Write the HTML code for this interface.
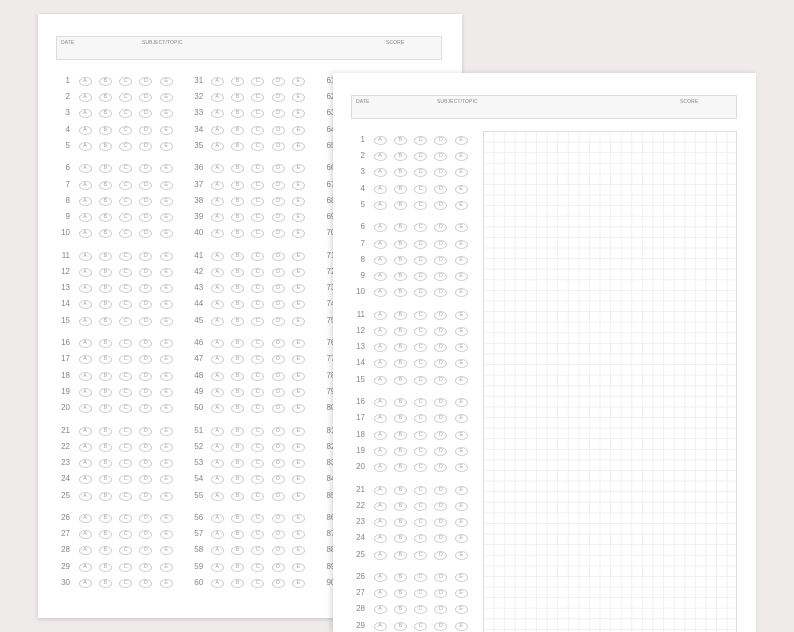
<!DOCTYPE html>
<html><head><meta charset="utf-8"><style>
*{margin:0;padding:0;box-sizing:border-box}
html,body{width:794px;height:632px;overflow:hidden;background:#efebea;font-family:"Liberation Sans",sans-serif;position:relative}
.pg{position:absolute;background:#fff;box-shadow:0 1px 4px rgba(0,0,0,.18);overflow:hidden}
#p1{left:38px;top:14px;width:424px;height:604px}
#p2{left:333px;top:73px;width:423px;height:559px;box-shadow:-2px 0 5px rgba(0,0,0,.15)}
.hd{position:absolute;left:18px;top:22px;width:386px;height:24px;border:1px solid #dcdcdc;background:#f7f7f7}
.hd span{position:absolute;top:3px;font-size:5px;color:#888;letter-spacing:.1px}
.r{position:absolute;left:18px;height:10px;white-space:nowrap;font-size:0}
.r b{display:inline-block;width:14px;text-align:right;font-weight:normal;font-size:8px;line-height:10px;color:#858585;vertical-align:top}
.r b.w{width:30.5px}
.r i{display:inline-block;width:13px;height:9px;margin-top:.5px;border:1px solid #cfcfcf;border-radius:50%;font-style:normal;font-size:5.5px;line-height:7px;text-align:center;color:#a8a8a8;margin-left:7.3px;vertical-align:top}
.r b+i{margin-left:8.5px}
.r b.w+i{margin-left:7.5px}
.grid{position:absolute;left:150px;top:58px;width:254px;height:501px;border:1px solid #ddd;border-bottom:none;
background-image:linear-gradient(#f0f0f0 1px,transparent 1px),linear-gradient(90deg,#f0f0f0 1px,transparent 1px);background-size:10.6px 10.6px;background-position:-1px -1px}
</style></head><body>
<div class="pg" id="p1">
<div class="hd"><span style="left:4px">DATE</span><span style="left:85px">SUBJECT/TOPIC</span><span style="left:329px">SCORE</span></div>
<div class="r" style="top:62px"><b>1</b><i>A</i><i>B</i><i>C</i><i>D</i><i>E</i><b class="w">31</b><i>A</i><i>B</i><i>C</i><i>D</i><i>E</i><b class="w">61</b></div>
<div class="r" style="top:78px"><b>2</b><i>A</i><i>B</i><i>C</i><i>D</i><i>E</i><b class="w">32</b><i>A</i><i>B</i><i>C</i><i>D</i><i>E</i><b class="w">62</b></div>
<div class="r" style="top:94px"><b>3</b><i>A</i><i>B</i><i>C</i><i>D</i><i>E</i><b class="w">33</b><i>A</i><i>B</i><i>C</i><i>D</i><i>E</i><b class="w">63</b></div>
<div class="r" style="top:111px"><b>4</b><i>A</i><i>B</i><i>C</i><i>D</i><i>E</i><b class="w">34</b><i>A</i><i>B</i><i>C</i><i>D</i><i>E</i><b class="w">64</b></div>
<div class="r" style="top:127px"><b>5</b><i>A</i><i>B</i><i>C</i><i>D</i><i>E</i><b class="w">35</b><i>A</i><i>B</i><i>C</i><i>D</i><i>E</i><b class="w">65</b></div>
<div class="r" style="top:149px"><b>6</b><i>A</i><i>B</i><i>C</i><i>D</i><i>E</i><b class="w">36</b><i>A</i><i>B</i><i>C</i><i>D</i><i>E</i><b class="w">66</b></div>
<div class="r" style="top:166px"><b>7</b><i>A</i><i>B</i><i>C</i><i>D</i><i>E</i><b class="w">37</b><i>A</i><i>B</i><i>C</i><i>D</i><i>E</i><b class="w">67</b></div>
<div class="r" style="top:182px"><b>8</b><i>A</i><i>B</i><i>C</i><i>D</i><i>E</i><b class="w">38</b><i>A</i><i>B</i><i>C</i><i>D</i><i>E</i><b class="w">68</b></div>
<div class="r" style="top:198px"><b>9</b><i>A</i><i>B</i><i>C</i><i>D</i><i>E</i><b class="w">39</b><i>A</i><i>B</i><i>C</i><i>D</i><i>E</i><b class="w">69</b></div>
<div class="r" style="top:214px"><b>10</b><i>A</i><i>B</i><i>C</i><i>D</i><i>E</i><b class="w">40</b><i>A</i><i>B</i><i>C</i><i>D</i><i>E</i><b class="w">70</b></div>
<div class="r" style="top:237px"><b>11</b><i>A</i><i>B</i><i>C</i><i>D</i><i>E</i><b class="w">41</b><i>A</i><i>B</i><i>C</i><i>D</i><i>E</i><b class="w">71</b></div>
<div class="r" style="top:253px"><b>12</b><i>A</i><i>B</i><i>C</i><i>D</i><i>E</i><b class="w">42</b><i>A</i><i>B</i><i>C</i><i>D</i><i>E</i><b class="w">72</b></div>
<div class="r" style="top:269px"><b>13</b><i>A</i><i>B</i><i>C</i><i>D</i><i>E</i><b class="w">43</b><i>A</i><i>B</i><i>C</i><i>D</i><i>E</i><b class="w">73</b></div>
<div class="r" style="top:285px"><b>14</b><i>A</i><i>B</i><i>C</i><i>D</i><i>E</i><b class="w">44</b><i>A</i><i>B</i><i>C</i><i>D</i><i>E</i><b class="w">74</b></div>
<div class="r" style="top:302px"><b>15</b><i>A</i><i>B</i><i>C</i><i>D</i><i>E</i><b class="w">45</b><i>A</i><i>B</i><i>C</i><i>D</i><i>E</i><b class="w">75</b></div>
<div class="r" style="top:324px"><b>16</b><i>A</i><i>B</i><i>C</i><i>D</i><i>E</i><b class="w">46</b><i>A</i><i>B</i><i>C</i><i>D</i><i>E</i><b class="w">76</b></div>
<div class="r" style="top:340px"><b>17</b><i>A</i><i>B</i><i>C</i><i>D</i><i>E</i><b class="w">47</b><i>A</i><i>B</i><i>C</i><i>D</i><i>E</i><b class="w">77</b></div>
<div class="r" style="top:357px"><b>18</b><i>A</i><i>B</i><i>C</i><i>D</i><i>E</i><b class="w">48</b><i>A</i><i>B</i><i>C</i><i>D</i><i>E</i><b class="w">78</b></div>
<div class="r" style="top:373px"><b>19</b><i>A</i><i>B</i><i>C</i><i>D</i><i>E</i><b class="w">49</b><i>A</i><i>B</i><i>C</i><i>D</i><i>E</i><b class="w">79</b></div>
<div class="r" style="top:389px"><b>20</b><i>A</i><i>B</i><i>C</i><i>D</i><i>E</i><b class="w">50</b><i>A</i><i>B</i><i>C</i><i>D</i><i>E</i><b class="w">80</b></div>
<div class="r" style="top:412px"><b>21</b><i>A</i><i>B</i><i>C</i><i>D</i><i>E</i><b class="w">51</b><i>A</i><i>B</i><i>C</i><i>D</i><i>E</i><b class="w">81</b></div>
<div class="r" style="top:428px"><b>22</b><i>A</i><i>B</i><i>C</i><i>D</i><i>E</i><b class="w">52</b><i>A</i><i>B</i><i>C</i><i>D</i><i>E</i><b class="w">82</b></div>
<div class="r" style="top:444px"><b>23</b><i>A</i><i>B</i><i>C</i><i>D</i><i>E</i><b class="w">53</b><i>A</i><i>B</i><i>C</i><i>D</i><i>E</i><b class="w">83</b></div>
<div class="r" style="top:460px"><b>24</b><i>A</i><i>B</i><i>C</i><i>D</i><i>E</i><b class="w">54</b><i>A</i><i>B</i><i>C</i><i>D</i><i>E</i><b class="w">84</b></div>
<div class="r" style="top:477px"><b>25</b><i>A</i><i>B</i><i>C</i><i>D</i><i>E</i><b class="w">55</b><i>A</i><i>B</i><i>C</i><i>D</i><i>E</i><b class="w">85</b></div>
<div class="r" style="top:499px"><b>26</b><i>A</i><i>B</i><i>C</i><i>D</i><i>E</i><b class="w">56</b><i>A</i><i>B</i><i>C</i><i>D</i><i>E</i><b class="w">86</b></div>
<div class="r" style="top:515px"><b>27</b><i>A</i><i>B</i><i>C</i><i>D</i><i>E</i><b class="w">57</b><i>A</i><i>B</i><i>C</i><i>D</i><i>E</i><b class="w">87</b></div>
<div class="r" style="top:531px"><b>28</b><i>A</i><i>B</i><i>C</i><i>D</i><i>E</i><b class="w">58</b><i>A</i><i>B</i><i>C</i><i>D</i><i>E</i><b class="w">88</b></div>
<div class="r" style="top:548px"><b>29</b><i>A</i><i>B</i><i>C</i><i>D</i><i>E</i><b class="w">59</b><i>A</i><i>B</i><i>C</i><i>D</i><i>E</i><b class="w">89</b></div>
<div class="r" style="top:564px"><b>30</b><i>A</i><i>B</i><i>C</i><i>D</i><i>E</i><b class="w">60</b><i>A</i><i>B</i><i>C</i><i>D</i><i>E</i><b class="w">90</b></div>
</div>
<div class="pg" id="p2">
<div class="hd"><span style="left:4px">DATE</span><span style="left:85px">SUBJECT/TOPIC</span><span style="left:328px">SCORE</span></div>
<div class="grid"></div>
<div class="r" style="top:62px"><b>1</b><i>A</i><i>B</i><i>C</i><i>D</i><i>E</i></div>
<div class="r" style="top:78px"><b>2</b><i>A</i><i>B</i><i>C</i><i>D</i><i>E</i></div>
<div class="r" style="top:94px"><b>3</b><i>A</i><i>B</i><i>C</i><i>D</i><i>E</i></div>
<div class="r" style="top:111px"><b>4</b><i>A</i><i>B</i><i>C</i><i>D</i><i>E</i></div>
<div class="r" style="top:127px"><b>5</b><i>A</i><i>B</i><i>C</i><i>D</i><i>E</i></div>
<div class="r" style="top:149px"><b>6</b><i>A</i><i>B</i><i>C</i><i>D</i><i>E</i></div>
<div class="r" style="top:166px"><b>7</b><i>A</i><i>B</i><i>C</i><i>D</i><i>E</i></div>
<div class="r" style="top:182px"><b>8</b><i>A</i><i>B</i><i>C</i><i>D</i><i>E</i></div>
<div class="r" style="top:198px"><b>9</b><i>A</i><i>B</i><i>C</i><i>D</i><i>E</i></div>
<div class="r" style="top:214px"><b>10</b><i>A</i><i>B</i><i>C</i><i>D</i><i>E</i></div>
<div class="r" style="top:237px"><b>11</b><i>A</i><i>B</i><i>C</i><i>D</i><i>E</i></div>
<div class="r" style="top:253px"><b>12</b><i>A</i><i>B</i><i>C</i><i>D</i><i>E</i></div>
<div class="r" style="top:269px"><b>13</b><i>A</i><i>B</i><i>C</i><i>D</i><i>E</i></div>
<div class="r" style="top:285px"><b>14</b><i>A</i><i>B</i><i>C</i><i>D</i><i>E</i></div>
<div class="r" style="top:302px"><b>15</b><i>A</i><i>B</i><i>C</i><i>D</i><i>E</i></div>
<div class="r" style="top:324px"><b>16</b><i>A</i><i>B</i><i>C</i><i>D</i><i>E</i></div>
<div class="r" style="top:340px"><b>17</b><i>A</i><i>B</i><i>C</i><i>D</i><i>E</i></div>
<div class="r" style="top:357px"><b>18</b><i>A</i><i>B</i><i>C</i><i>D</i><i>E</i></div>
<div class="r" style="top:373px"><b>19</b><i>A</i><i>B</i><i>C</i><i>D</i><i>E</i></div>
<div class="r" style="top:389px"><b>20</b><i>A</i><i>B</i><i>C</i><i>D</i><i>E</i></div>
<div class="r" style="top:412px"><b>21</b><i>A</i><i>B</i><i>C</i><i>D</i><i>E</i></div>
<div class="r" style="top:428px"><b>22</b><i>A</i><i>B</i><i>C</i><i>D</i><i>E</i></div>
<div class="r" style="top:444px"><b>23</b><i>A</i><i>B</i><i>C</i><i>D</i><i>E</i></div>
<div class="r" style="top:460px"><b>24</b><i>A</i><i>B</i><i>C</i><i>D</i><i>E</i></div>
<div class="r" style="top:477px"><b>25</b><i>A</i><i>B</i><i>C</i><i>D</i><i>E</i></div>
<div class="r" style="top:499px"><b>26</b><i>A</i><i>B</i><i>C</i><i>D</i><i>E</i></div>
<div class="r" style="top:515px"><b>27</b><i>A</i><i>B</i><i>C</i><i>D</i><i>E</i></div>
<div class="r" style="top:531px"><b>28</b><i>A</i><i>B</i><i>C</i><i>D</i><i>E</i></div>
<div class="r" style="top:548px"><b>29</b><i>A</i><i>B</i><i>C</i><i>D</i><i>E</i></div>
</div>
</body></html>
